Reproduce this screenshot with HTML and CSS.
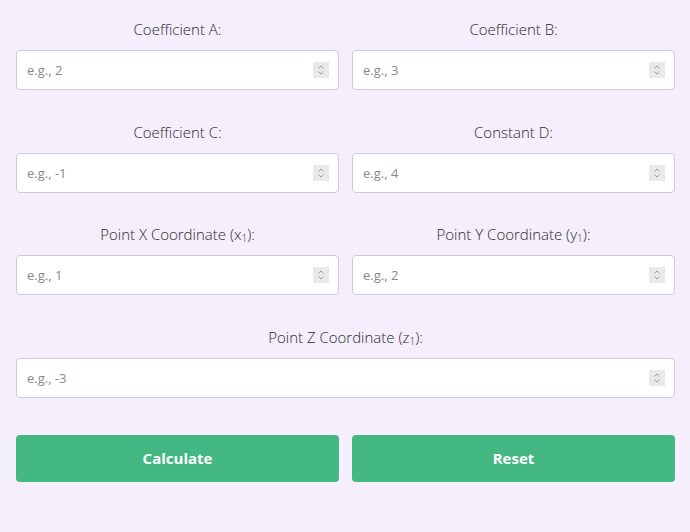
FILE: index.html
```html
<!DOCTYPE html>
<html lang="en">
<head>
<meta charset="UTF-8">
<title>Plane Distance Calculator</title>
<link rel="stylesheet" href="styles.css">
</head>
<body>
    <div id="calculator">
        <div class="field">
            <label for="coefA">Coefficient A:</label>
            <div class="number-box">
                <input type="number" id="coefA" placeholder="e.g., 2">
                <span class="spinner"><svg viewBox="0 0 16 16"><path d="M5.5 6.5 8 4l2.5 2.5M5.5 9.5 8 12l2.5-2.5"/></svg></span>
            </div>
        </div>
        <div class="field">
            <label for="coefB">Coefficient B:</label>
            <div class="number-box">
                <input type="number" id="coefB" placeholder="e.g., 3">
                <span class="spinner"><svg viewBox="0 0 16 16"><path d="M5.5 6.5 8 4l2.5 2.5M5.5 9.5 8 12l2.5-2.5"/></svg></span>
            </div>
        </div>
        <div class="field">
            <label for="coefC">Coefficient C:</label>
            <div class="number-box">
                <input type="number" id="coefC" placeholder="e.g., -1">
                <span class="spinner"><svg viewBox="0 0 16 16"><path d="M5.5 6.5 8 4l2.5 2.5M5.5 9.5 8 12l2.5-2.5"/></svg></span>
            </div>
        </div>
        <div class="field">
            <label for="constD">Constant D:</label>
            <div class="number-box">
                <input type="number" id="constD" placeholder="e.g., 4">
                <span class="spinner"><svg viewBox="0 0 16 16"><path d="M5.5 6.5 8 4l2.5 2.5M5.5 9.5 8 12l2.5-2.5"/></svg></span>
            </div>
        </div>
        <div class="field">
            <label for="pointX">Point X Coordinate (x<sub>1</sub>):</label>
            <div class="number-box">
                <input type="number" id="pointX" placeholder="e.g., 1">
                <span class="spinner"><svg viewBox="0 0 16 16"><path d="M5.5 6.5 8 4l2.5 2.5M5.5 9.5 8 12l2.5-2.5"/></svg></span>
            </div>
        </div>
        <div class="field">
            <label for="pointY">Point Y Coordinate (y<sub>1</sub>):</label>
            <div class="number-box">
                <input type="number" id="pointY" placeholder="e.g., 2">
                <span class="spinner"><svg viewBox="0 0 16 16"><path d="M5.5 6.5 8 4l2.5 2.5M5.5 9.5 8 12l2.5-2.5"/></svg></span>
            </div>
        </div>
        <div class="field wide">
            <label for="pointZ">Point Z Coordinate (z<sub>1</sub>):</label>
            <div class="number-box">
                <input type="number" id="pointZ" placeholder="e.g., -3">
                <span class="spinner"><svg viewBox="0 0 16 16"><path d="M5.5 6.5 8 4l2.5 2.5M5.5 9.5 8 12l2.5-2.5"/></svg></span>
            </div>
        </div>
        <div class="buttons">
            <button class="btn">Calculate</button>
            <button class="btn">Reset</button>
        </div>
    </div>
</body>
</html>
```

FILE: styles.css
```css
body {
    font-family: 'Open Sans', 'Noto Sans', sans-serif;
    background-color: #f4eefd;
    margin: 0;
    padding: 0;
}

#calculator {
    display: grid;
    grid-template-columns: 1fr 1fr;
    column-gap: 13px;
    row-gap: 32.7px;
    padding: 20px 15px 0 16px;
}

.field {
    display: flex;
    flex-direction: column;
}

.field.wide {
    grid-column: span 2;
}

.field label {
    text-align: center;
    font-size: 15px;
    font-weight: 300;
    line-height: 19px;
    color: #2b2b2b;
    margin-bottom: 11px;
}

.field label sub {
    font-size: 10px;
    vertical-align: -2px;
    line-height: 0;
}

.number-box {
    display: flex;
    align-items: center;
    height: 40px;
    box-sizing: border-box;
    background-color: #fff;
    border: 1px solid #cfcbd6;
    border-radius: 4px;
    padding: 0 9px 0 10px;
}

.number-box input {
    flex: 1;
    min-width: 0;
    border: none;
    outline: none;
    background: none;
    font-family: inherit;
    font-size: 13px;
    color: #333;
    padding: 0;
    -moz-appearance: textfield;
}

.number-box input::placeholder {
    color: #8a8a8a;
}

.number-box input::-webkit-outer-spin-button,
.number-box input::-webkit-inner-spin-button {
    -webkit-appearance: none;
    margin: 0;
}

.spinner {
    width: 16px;
    height: 16px;
    background-color: #e9e8ec;
    display: flex;
}

.spinner svg {
    width: 16px;
    height: 16px;
    fill: none;
    stroke: #9a9aa0;
    stroke-width: 1;
}

.buttons {
    grid-column: span 2;
    display: grid;
    grid-template-columns: 1fr 1fr;
    gap: 13px;
    margin-top: 4px;
}

.btn {
    height: 47px;
    border: none;
    border-radius: 4px;
    background-color: #43b883;
    color: #fff;
    font-family: inherit;
    font-size: 15px;
    font-weight: 700;
    cursor: pointer;
}

.btn:hover {
    background-color: #38a372;
}
```
